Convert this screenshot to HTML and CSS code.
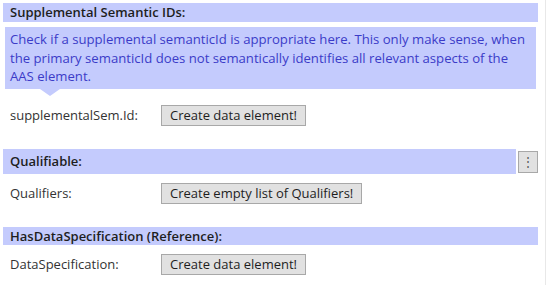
FILE: index.html
```html
<!DOCTYPE html>
<html lang="en">
<head>
    <meta charset="UTF-8">
    <title>Supplemental Semantic IDs</title>
    <link rel="stylesheet" href="styles.css">
</head>
<body>
<section class="panel">
    <div class="header">Supplemental Semantic IDs:</div>
    <div class="hint">
        Check if a supplemental semanticId is appropriate here. This only make sense, when
        the primary semanticId does not semantically identifies all relevant aspects of the
        AAS element.
    </div>
    <div class="row first">
        <label>supplementalSem.Id:</label>
        <button type="button">Create data element!</button>
    </div>

    <div class="header-line">
        <div class="header tall">Qualifiable:</div>
        <button type="button" class="menu">&#8942;</button>
    </div>
    <div class="row">
        <label>Qualifiers:</label>
        <button type="button">Create empty list of Qualifiers!</button>
    </div>

    <div class="header spaced">HasDataSpecification (Reference):</div>
    <div class="row">
        <label>DataSpecification:</label>
        <button type="button">Create data element!</button>
    </div>
</section>
</body>
</html>
```

FILE: styles.css
```css
* {
    padding: 0;
    margin: 0;
    box-sizing: border-box;
}
body {
    font-family: "Open Sans", "Noto Sans", sans-serif;
    font-size: 13px;
    color: #333;
    background-color: white;
}
.panel {
    width: 546px;
    padding: 3px 7px 10px 3px;
    border-right: 1px solid #e8e8e8;
}
.header {
    height: 19px;
    background-color: #c4cbfd;
    color: #1e1e1e;
    font-weight: 600;
    padding-left: 7px;
    line-height: 19px;
}
.hint {
    position: relative;
    margin: 5px 2px 0 2px;
    padding: 3px 5px 4px 5px;
    background-color: #c4cbfd;
    color: #3b3bc8;
    font-size: 13.15px;
    line-height: 18.5px;
    height: 62px;
}
.hint::after {
    content: "";
    position: absolute;
    left: 35px;
    bottom: -7px;
    border-left: 10px solid transparent;
    border-right: 10px solid transparent;
    border-top: 7px solid #c4cbfd;
}
.row {
    display: grid;
    grid-template-columns: 151px auto;
    align-items: center;
    padding-left: 7px;
    height: 22px;
    margin-top: 8px;
}
.row.first {
    margin-top: 15px;
}
.row label {
    color: #333;
}
.row button {
    justify-self: start;
    height: 21px;
    padding: 0 8px;
    font-family: inherit;
    font-size: 13px;
    color: #1e1e1e;
    background-color: #e1e1e1;
    border: 1px solid #a8a8a8;
    border-radius: 0;
}
.header-line {
    display: flex;
    align-items: center;
    gap: 2px;
    margin-top: 23px;
}
.header.tall {
    flex: 1;
    height: 25px;
    line-height: 25px;
}
.menu {
    width: 20px;
    height: 22px;
    font-size: 12px;
    color: #555;
    background-color: #e1e1e1;
    border: 1px solid #a8a8a8;
}
.header.spaced {
    margin-top: 23px;
    height: 18px;
    line-height: 18px;
}
```
